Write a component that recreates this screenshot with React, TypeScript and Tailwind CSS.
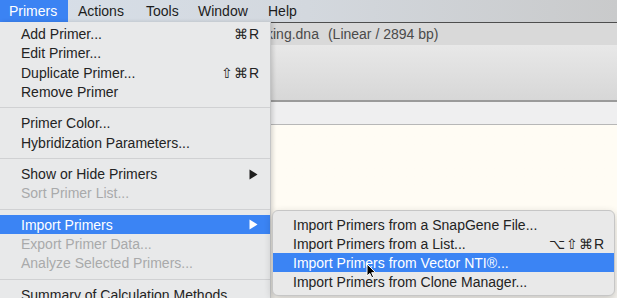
import React from "react";

const FONT = "font-['Liberation_Sans',Arial,sans-serif]";

type Item =
  | { kind: "sep" }
  | { kind: "item"; label: string; shortcut?: string; disabled?: boolean; sub?: boolean; active?: boolean };

const items: Item[] = [
  { kind: "item", label: "Add Primer...", shortcut: "⌘R" },
  { kind: "item", label: "Edit Primer..." },
  { kind: "item", label: "Duplicate Primer...", shortcut: "⇧⌘R" },
  { kind: "item", label: "Remove Primer" },
  { kind: "sep" },
  { kind: "item", label: "Primer Color..." },
  { kind: "item", label: "Hybridization Parameters..." },
  { kind: "sep" },
  { kind: "item", label: "Show or Hide Primers", sub: true },
  { kind: "item", label: "Sort Primer List...", disabled: true },
  { kind: "sep" },
  { kind: "item", label: "Import Primers", sub: true, active: true },
  { kind: "item", label: "Export Primer Data...", disabled: true },
  { kind: "item", label: "Analyze Selected Primers...", disabled: true },
  { kind: "sep" },
  { kind: "item", label: "Summary of Calculation Methods" },
];

const subItems = [
  { label: "Import Primers from a SnapGene File..." },
  { label: "Import Primers from a List...", shortcut: "⌥⇧⌘R" },
  { label: "Import Primers from Vector NTI®...", active: true },
  { label: "Import Primers from Clone Manager..." },
];

function Arrow({ white }: { white?: boolean }) {
  return (
    <svg width="9" height="11" viewBox="0 0 9 11" className="shrink-0">
      <path d="M0.5 0.5 L8.5 5.5 L0.5 10.5 Z" fill={white ? "#ffffff" : "#1f1f1f"} />
    </svg>
  );
}

export default function App() {
  return (
    <div className={`relative w-[617px] h-[298px] overflow-hidden ${FONT} text-[14px] leading-none`}>
      {/* Background window */}
      <div className="flex flex-col h-full">
        {/* Menu bar */}
        <div className="h-[22px] flex items-stretch bg-gradient-to-r from-[#d7dfe9] via-[#d3d8de] to-[#c9cacb] text-[#1c1c1c] shrink-0">
          <div className="w-[68px] pl-[9px] flex items-center bg-[#3b83f3] text-white">Primers</div>
          <div className="w-[78px] pl-[10px] flex items-center">Actions</div>
          <div className="w-[52px] flex items-center">Tools</div>
          <div className="w-[70px] flex items-center">Window</div>
          <div className="flex items-center">Help</div>
        </div>
        {/* Title bar */}
        <div className="h-[23px] border-t border-[#4e4e4e] bg-[#d9d9d9] flex items-center pl-[266px] text-[#4a4a4a] shrink-0">
          <span>king.dna</span>
          <span className="ml-[9px]">(Linear / 2894 bp)</span>
        </div>
        {/* Toolbar */}
        <div className="h-[57px] bg-gradient-to-b from-[#e8e8e8] to-[#d7d7d7] border-b-2 border-[#9a9a9a] shrink-0" />
        {/* Strip */}
        <div className="h-[23px] bg-[#efeff0] border-b border-[#b7b7b7] shrink-0" />
        {/* Content */}
        <div className="flex-1 bg-gradient-to-b from-[#fffcf4] via-[#fffcf4] to-[#f7f5f0]" />
      </div>

      {/* Primers dropdown menu */}
      <div className="absolute left-0 top-[22px] w-[271px] h-[290px] bg-[#e8e9ea] border-r border-[#c4c5c6] shadow-[2px_0_4px_rgba(0,0,0,0.15)] pt-[2.5px] flex flex-col">
        {items.map((it, i) =>
          it.kind === "sep" ? (
            <div key={i} className="h-[12px] flex items-center shrink-0">
              <div className="w-full h-[1px] bg-[#d0d1d3]" />
            </div>
          ) : (
            <div
              key={i}
              className={`h-[19.33px] shrink-0 flex items-center pl-[21px] pr-[10px] ${
                it.active ? "bg-[#3b84f4] text-white" : it.disabled ? "text-[#a9aaab]" : "text-[#232323]"
              }`}
            >
              <span className="flex-1">{it.label}</span>
              {it.shortcut && <span className="tracking-[1px]">{it.shortcut}</span>}
              {it.sub && (
                <span className="mr-[2px]">
                  <Arrow white={it.active} />
                </span>
              )}
            </div>
          )
        )}
      </div>

      {/* Submenu */}
      <div className="absolute left-[272px] top-[210px] w-[343px] h-[86px] rounded-[6px] border border-[#c6c6c6] bg-[#e9e9e9] shadow-[0_3px_8px_rgba(0,0,0,0.2)] pt-[4px] overflow-hidden">
        {subItems.map((s, i) => (
          <div
            key={i}
            className={`h-[19px] flex items-center pl-[20px] pr-[9px] ${
              s.active ? "bg-[#3b84f4] text-white" : "text-[#232323]"
            }`}
          >
            <span className="flex-1">{s.label}</span>
            {s.shortcut && <span className="tracking-[1px]">{s.shortcut}</span>}
          </div>
        ))}
      </div>

      {/* Mouse cursor */}
      <svg className="absolute left-[366px] top-[263px]" width="11" height="16" viewBox="0 0 11 16">
        <path
          d="M1 1 L1 13 L3.8 10.4 L5.8 14.8 L7.6 14 L5.7 9.7 L9.6 9.7 Z"
          fill="#000"
          stroke="#fff"
          strokeWidth="1"
          strokeLinejoin="round"
        />
      </svg>
    </div>
  );
}
